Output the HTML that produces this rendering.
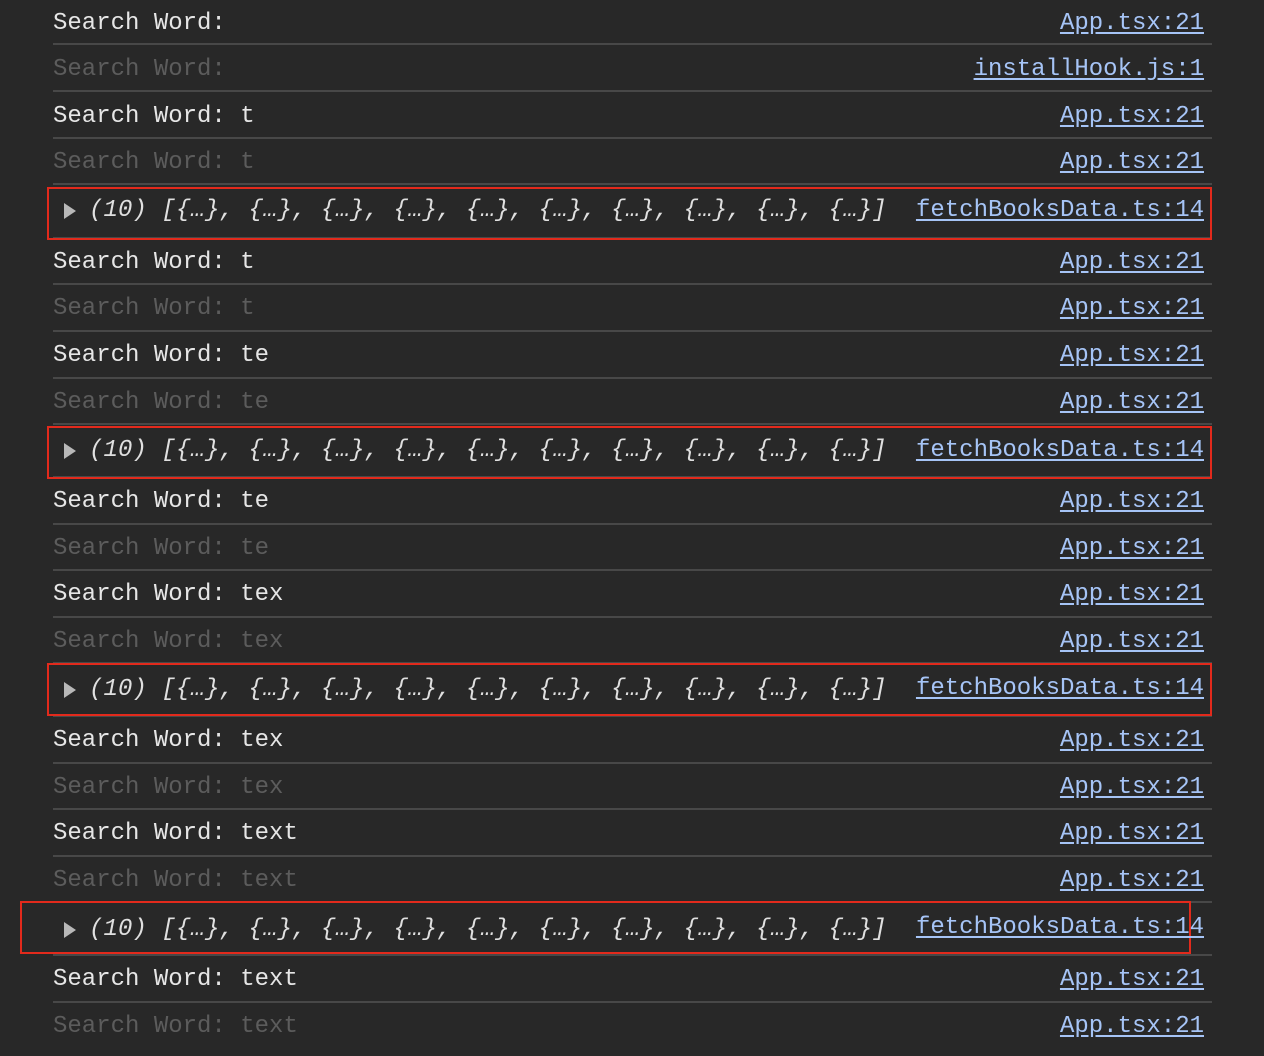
<!DOCTYPE html>
<html><head><meta charset="utf-8"><style>
html,body{margin:0;padding:0;background:#282828;width:1264px;height:1056px;overflow:hidden;position:relative}
.t{position:absolute;left:53px;height:30px;line-height:30px;font-family:"Liberation Mono","DejaVu Sans Mono",monospace;font-size:24px;white-space:pre;letter-spacing:0px;margin-top:2px}
.w{color:#e6e6e6}.d{color:#5c5c5c}
.l{position:absolute;right:60px;height:30px;line-height:30px;font-family:"Liberation Mono","DejaVu Sans Mono",monospace;font-size:24px;color:#a6c4f6;text-decoration:underline;text-underline-offset:3px;white-space:pre;letter-spacing:0px;margin-top:2px}
.s{position:absolute;left:53px;width:1159px;height:2px;background:#484848}
.b{position:absolute;border:2px solid #e22a1c;box-sizing:border-box}
.a{position:absolute;left:89px;height:30px;line-height:30px;font-family:"Liberation Mono","DejaVu Sans Mono",monospace;font-size:24px;font-style:italic;color:#e0e0e0;white-space:pre;letter-spacing:0.1px;margin-top:2px}
.tri{position:absolute;left:64px;width:0;height:0;border-left:12px solid #b8b8b8;border-top:8px solid transparent;border-bottom:8px solid transparent;margin-top:1px}
</style></head><body>
<div class="s" style="top:43px"></div><div class="s" style="top:90px"></div><div class="s" style="top:137px"></div><div class="s" style="top:183px"></div><div class="s" style="top:237px"></div><div class="s" style="top:283px"></div><div class="s" style="top:330px"></div><div class="s" style="top:377px"></div><div class="s" style="top:423px"></div><div class="s" style="top:476px"></div><div class="s" style="top:523px"></div><div class="s" style="top:569px"></div><div class="s" style="top:616px"></div><div class="s" style="top:662px"></div><div class="s" style="top:715px"></div><div class="s" style="top:762px"></div><div class="s" style="top:808px"></div><div class="s" style="top:855px"></div><div class="s" style="top:901px"></div><div class="s" style="top:954px"></div><div class="s" style="top:1001px"></div>

<div class="t w" style="top:7px">Search Word:</div><div class="l" style="top:7px">App.tsx:21</div>
<div class="t d" style="top:53px">Search Word:</div><div class="l" style="top:53px">installHook.js:1</div>
<div class="t w" style="top:100px">Search Word: t</div><div class="l" style="top:100px">App.tsx:21</div>
<div class="t d" style="top:146px">Search Word: t</div><div class="l" style="top:146px">App.tsx:21</div>
<div class="b" style="left:47px;top:187px;width:1165px;height:53px"></div><div class="tri" style="top:202px"></div><div class="a" style="top:194px">(10) [{…}, {…}, {…}, {…}, {…}, {…}, {…}, {…}, {…}, {…}]</div><div class="l" style="top:194px">fetchBooksData.ts:14</div>
<div class="t w" style="top:246px">Search Word: t</div><div class="l" style="top:246px">App.tsx:21</div>
<div class="t d" style="top:292px">Search Word: t</div><div class="l" style="top:292px">App.tsx:21</div>
<div class="t w" style="top:339px">Search Word: te</div><div class="l" style="top:339px">App.tsx:21</div>
<div class="t d" style="top:386px">Search Word: te</div><div class="l" style="top:386px">App.tsx:21</div>
<div class="b" style="left:47px;top:426px;width:1165px;height:53px"></div><div class="tri" style="top:442px"></div><div class="a" style="top:434px">(10) [{…}, {…}, {…}, {…}, {…}, {…}, {…}, {…}, {…}, {…}]</div><div class="l" style="top:434px">fetchBooksData.ts:14</div>
<div class="t w" style="top:485px">Search Word: te</div><div class="l" style="top:485px">App.tsx:21</div>
<div class="t d" style="top:532px">Search Word: te</div><div class="l" style="top:532px">App.tsx:21</div>
<div class="t w" style="top:578px">Search Word: tex</div><div class="l" style="top:578px">App.tsx:21</div>
<div class="t d" style="top:625px">Search Word: tex</div><div class="l" style="top:625px">App.tsx:21</div>
<div class="b" style="left:47px;top:663px;width:1165px;height:53px"></div><div class="tri" style="top:681px"></div><div class="a" style="top:673px">(10) [{…}, {…}, {…}, {…}, {…}, {…}, {…}, {…}, {…}, {…}]</div><div class="l" style="top:672px">fetchBooksData.ts:14</div>
<div class="t w" style="top:724px">Search Word: tex</div><div class="l" style="top:724px">App.tsx:21</div>
<div class="t d" style="top:771px">Search Word: tex</div><div class="l" style="top:771px">App.tsx:21</div>
<div class="t w" style="top:817px">Search Word: text</div><div class="l" style="top:817px">App.tsx:21</div>
<div class="t d" style="top:864px">Search Word: text</div><div class="l" style="top:864px">App.tsx:21</div>
<div class="b" style="left:20px;top:901px;width:1171px;height:53px"></div><div class="tri" style="top:921px"></div><div class="a" style="top:913px">(10) [{…}, {…}, {…}, {…}, {…}, {…}, {…}, {…}, {…}, {…}]</div><div class="l" style="top:911px">fetchBooksData.ts:14</div>
<div class="t w" style="top:963px">Search Word: text</div><div class="l" style="top:963px">App.tsx:21</div>
<div class="t d" style="top:1010px">Search Word: text</div><div class="l" style="top:1010px">App.tsx:21</div>
</body></html>
